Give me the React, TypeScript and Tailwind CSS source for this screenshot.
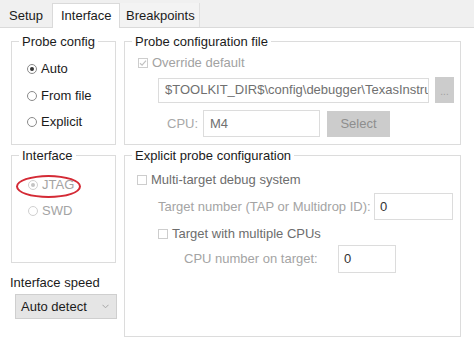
import React from 'react';

const Radio = ({ checked, disabled }: { checked?: boolean; disabled?: boolean }) => (
  <span
    className={`flex items-center justify-center w-[10px] h-[10px] rounded-full border bg-white ${
      disabled ? 'border-[#d0d0d0]' : 'border-[#8a8a8a]'
    }`}
  >
    {checked && (
      <span className={`w-[4px] h-[4px] rounded-full ${disabled ? 'bg-[#c4c4c4]' : 'bg-[#333333]'}`} />
    )}
  </span>
);

const Check = ({ checked }: { checked?: boolean }) => (
  <span className="flex items-center justify-center w-[10px] h-[10px] border border-[#cdcdcd] bg-white">
    {checked && (
      <svg width="8" height="8" viewBox="0 0 8 8">
        <path d="M1 4.2 L3.1 6.2 L7 1.6" fill="none" stroke="#c2c2c2" strokeWidth="1.2" />
      </svg>
    )}
  </span>
);

const Group = ({ title, className, children }: { title: string; className: string; children?: React.ReactNode }) => (
  <fieldset className={`border border-[#dcdcdc] ${className}`}>
    <legend className="ml-[7px] px-[3px] leading-[15px] text-[#1b1b1b]">{title}</legend>
    {children}
  </fieldset>
);

export default function App() {
  return (
    <div className="relative w-[474px] h-[341px] overflow-hidden bg-white text-[13px] font-['Liberation_Sans',Arial,sans-serif] text-[#1b1b1b]">
      {/* Tab strip */}
      <div className="flex items-end h-[28px] pl-[3px] bg-[#f0f0f0] border-b border-[#dadada]">
        <div className="flex items-center h-[24px] w-[49px] pl-[6px] leading-none">Setup</div>
        <div className="flex items-center h-[25px] w-[68px] pl-[8px] -mb-px pb-[2px] bg-white border-x border-t border-[#dadada] leading-none">
          Interface
        </div>
        <div className="flex items-center h-[24px] w-[80px] pl-[6px] bg-[#f3f3f3] border-r border-[#e0e0e0] leading-none">
          Breakpoints
        </div>
      </div>

      {/* Content */}
      <div className="flex gap-[8px] pl-[11px] pt-[6px]">
        {/* Left column */}
        <div className="flex flex-col w-[105px]">
          <Group title="Probe config" className="h-[111px]">
            <div className="flex flex-col mt-[7px] pl-[15px]">
              <div className="flex items-center gap-[4px] h-[26px]">
                <Radio checked />
                <span>Auto</span>
              </div>
              <div className="flex items-center gap-[4px] h-[27px]">
                <Radio />
                <span>From file</span>
              </div>
              <div className="flex items-center gap-[4px] h-[26px]">
                <Radio />
                <span>Explicit</span>
              </div>
            </div>
          </Group>

          <Group title="Interface" className="h-[115px] mt-[3px]">
            <div className="flex flex-col mt-[9px] pl-[16px] text-[#a4a4a4]">
              <div className="flex items-center gap-[4px] h-[26px]">
                <Radio checked disabled />
                <span>JTAG</span>
              </div>
              <div className="flex items-center gap-[4px] h-[26px]">
                <Radio disabled />
                <span>SWD</span>
              </div>
            </div>
          </Group>

          <div className="mt-[12px] -ml-px h-[16px] leading-[16px]">Interface speed</div>
          <div className="flex items-center justify-between mt-[3px] ml-[4px] w-[102px] h-[25px] pl-[5px] pr-[7px] bg-[#e5e5e5] border border-[#cfcfcf]">
            <span>Auto detect</span>
            <svg width="7" height="5" viewBox="0 0 7 5">
              <path d="M0.5 0.8 L3.5 3.8 L6.5 0.8" fill="none" stroke="#a6a6a6" strokeWidth="1" />
            </svg>
          </div>
        </div>

        {/* Right column */}
        <div className="flex flex-col w-[337px]">
          <Group title="Probe configuration file" className="h-[111px]">
            <div className="flex items-center gap-[4px] h-[20px] mt-[4px] pl-[13px] text-[#a2a2a2]">
              <Check checked />
              <span>Override default</span>
            </div>
            <div className="flex items-center mt-[4px] pl-[33px] h-[26px]">
              <div className="flex items-center w-[271px] h-[25px] pl-[6px] border border-[#dcdcdc] overflow-hidden whitespace-nowrap text-[#707070]">
                <span>$TOOLKIT_DIR$\config\debugger\TexasInstru</span>
              </div>
              <div className="flex items-end justify-center ml-[6px] w-[19px] h-[26px] pb-[6px] bg-[#cccccc] text-[#a0a0a0] text-[10px] leading-none">
                ...
              </div>
            </div>
            <div className="flex items-center mt-[7px] pl-[42px] h-[27px]">
              <span className="w-[36px] text-[#a8a8a8]">CPU:</span>
              <div className="flex items-center w-[117px] h-[27px] px-[6px] border border-[#dcdcdc] text-[#707070]">M4</div>
              <div className="flex items-center justify-center ml-[7px] w-[63px] h-[26px] bg-[#cccccc] text-[#8e8e8e]">
                Select
              </div>
            </div>
          </Group>

          <Group title="Explicit probe configuration" className="h-[189px] mt-[3px]">
            <div className="flex items-center gap-[4px] h-[20px] mt-[7px] pl-[12px] text-[#6d6d6d]">
              <Check />
              <span>Multi-target debug system</span>
            </div>
            <div className="flex items-center mt-[3px] pl-[33px] h-[27px]">
              <span className="w-[216px] whitespace-nowrap text-[#a4a4a4]">Target number (TAP or Multidrop ID):</span>
              <div className="flex items-center w-[79px] h-[27px] px-[5px] border border-[#dcdcdc] text-[#333333]">0</div>
            </div>
            <div className="flex items-center gap-[4px] h-[20px] mt-[4px] pl-[33px] text-[#6d6d6d]">
              <Check />
              <span>Target with multiple CPUs</span>
            </div>
            <div className="flex items-center mt-[1px] pl-[59px] h-[28px]">
              <span className="w-[154px] whitespace-nowrap text-[#a4a4a4]">CPU number on target:</span>
              <div className="flex items-center w-[58px] h-[28px] px-[5px] border border-[#dcdcdc] text-[#333333]">0</div>
            </div>
          </Group>
        </div>
      </div>

      {/* Red annotation around JTAG */}
      <div className="absolute left-[16px] top-[175px] w-[65px] h-[23px] rounded-[50%] border-2 border-[#d42a35]" />
    </div>
  );
}
